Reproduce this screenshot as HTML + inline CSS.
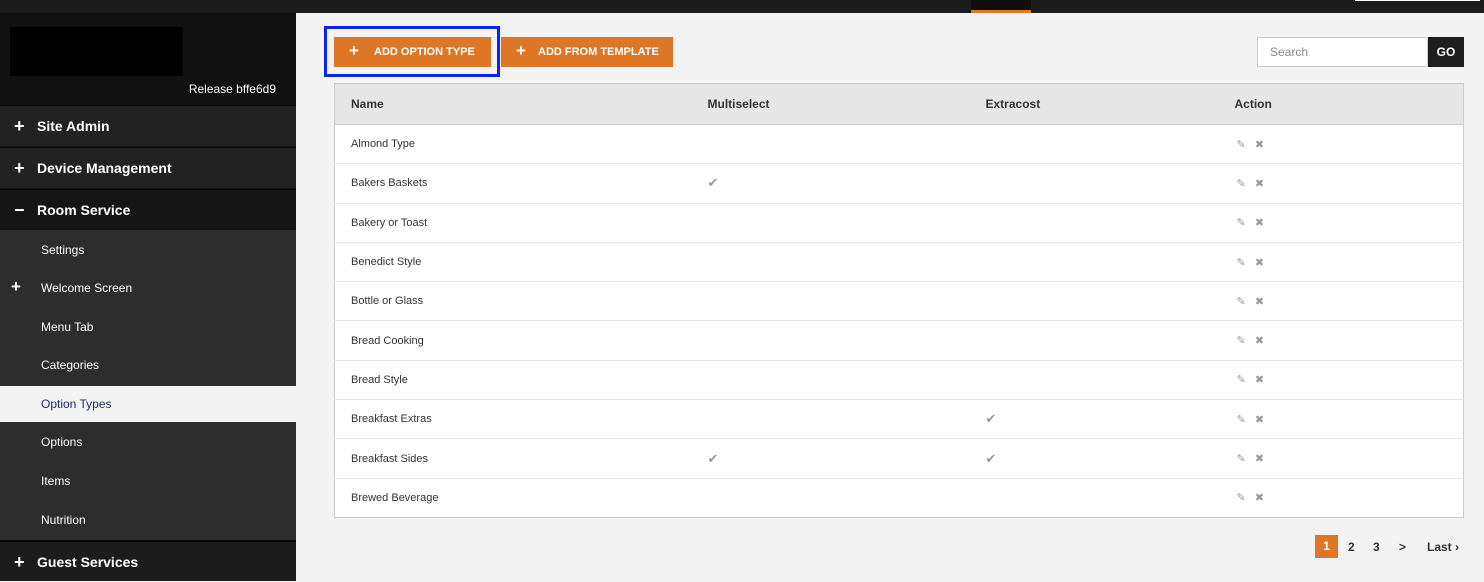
<!DOCTYPE html>
<html><head><style>
*{margin:0;padding:0;box-sizing:border-box}
body{width:1484px;height:565px;overflow:hidden;background:#f3f3f3;font-family:"Liberation Sans",sans-serif;position:relative}
.top{position:absolute;left:0;top:0;width:1484px;height:13px;background:#1b1b1b}
.tab{position:absolute;left:971px;top:0;width:60px;height:13px;background:#0f0f0f;border-bottom:3px solid #e07b24}
.tr{position:absolute;left:1355px;top:0;width:125px;height:1px;background:#fff}
.side{position:absolute;left:0;top:13px;width:296px;height:552px;background:#111}
.logo{position:absolute;left:10px;top:14px;width:173px;height:49px;background:#000}
.rel{position:absolute;right:20px;top:69px;color:#fff;font-size:12px}
.m{position:absolute;left:0;width:296px;height:41px;background:#222;border-top:1px solid #0a0a0a;color:#fff;font-weight:bold;font-size:14px;line-height:40px;padding-left:37px}
.m b{position:absolute;left:14px;top:0;font-size:18px}
.sub{position:absolute;left:0;top:217px;width:296px;height:310px;background:#2d2d2d}
.s{position:absolute;left:0;width:296px;color:#fff;font-size:12px;padding-left:41px}
.btn{position:absolute;top:37px;height:30px;background:#dd7726;color:#fff;font-weight:bold;font-size:11px;line-height:30px}
.btn span{font-size:17px;font-weight:bold;position:absolute;left:15px;top:-1px}
.hl{position:absolute;left:324px;top:26px;width:176px;height:51px;border:3px solid #0a23f5}
.search{position:absolute;left:1257px;top:37px;width:171px;height:30px;background:#fff;border:1px solid #ccc;color:#888;font-size:12px;line-height:28px;padding-left:12px}
.go{position:absolute;left:1428px;top:37px;width:36px;height:30px;background:#1e1e1e;color:#fff;font-weight:bold;font-size:12px;line-height:30px;text-align:center}
table{position:absolute;left:334px;top:83px;width:1130px;border-collapse:collapse;background:#fff;border:1px solid #ccc;font-size:11px;color:#333;table-layout:fixed}
th{background:#e6e6e6;height:41px;text-align:left;font-size:12px;font-weight:bold;color:#333;border-bottom:1px solid #ccc}
td{height:39.3px;border-top:1px solid #e6e6e6}
th:nth-child(1),td:nth-child(1){padding-left:16px;width:373px}
th:nth-child(2),td:nth-child(2){width:278px}
th:nth-child(3),td:nth-child(3){width:249px}
.ck{color:#999;font-size:13px}
.ic{color:#999;font-size:11px;padding-left:2px}
.pg{position:absolute;top:535px;font-size:12px;color:#333;font-weight:bold}
</style></head><body>
<div class="top"></div><div class="tab"></div><div class="tr"></div>
<div class="side">
<div class="logo"></div><div class="rel">Release bffe6d9</div>
<div class="m" style="top:92px"><b>+</b>Site Admin</div>
<div class="m" style="top:134px"><b>+</b>Device Management</div>
<div class="m" style="top:176px;background:#151515"><b>−</b>Room Service</div>
<div class="sub"></div>
<div class="s" style="top:230px">Settings</div>
<div class="s" style="top:268px"><b style="position:absolute;left:11px;font-size:17px;top:-4px">+</b>Welcome Screen</div>
<div class="s" style="top:307px">Menu Tab</div>
<div class="s" style="top:345px">Categories</div>
<div class="s" style="top:373px;height:36px;background:#f3f3f3;color:#1e2a5a;line-height:36px">Option Types</div>
<div class="s" style="top:422px">Options</div>
<div class="s" style="top:461px">Items</div>
<div class="s" style="top:500px">Nutrition</div>
<div class="m" style="top:527px;background:#1c1c1c;border-top:2px solid #000"><b>+</b>Guest Services</div>
</div>
<div class="btn" style="left:334px;width:157px;padding-left:40px"><span>+</span>ADD OPTION TYPE</div>
<div class="btn" style="left:501px;width:172px;padding-left:37px"><span>+</span>ADD FROM TEMPLATE</div>
<div class="hl"></div>
<div class="search">Search</div><div class="go">GO</div>
<table>
<tr><th>Name</th><th>Multiselect</th><th>Extracost</th><th>Action</th></tr>
<tr><td>Almond Type</td><td></td><td></td><td class="ic">✎ &nbsp; ✖</td></tr>
<tr><td>Bakers Baskets</td><td class="ck">✔</td><td></td><td class="ic">✎ &nbsp; ✖</td></tr>
<tr><td>Bakery or Toast</td><td></td><td></td><td class="ic">✎ &nbsp; ✖</td></tr>
<tr><td>Benedict Style</td><td></td><td></td><td class="ic">✎ &nbsp; ✖</td></tr>
<tr><td>Bottle or Glass</td><td></td><td></td><td class="ic">✎ &nbsp; ✖</td></tr>
<tr><td>Bread Cooking</td><td></td><td></td><td class="ic">✎ &nbsp; ✖</td></tr>
<tr><td>Bread Style</td><td></td><td></td><td class="ic">✎ &nbsp; ✖</td></tr>
<tr><td>Breakfast Extras</td><td></td><td class="ck">✔</td><td class="ic">✎ &nbsp; ✖</td></tr>
<tr><td>Breakfast Sides</td><td class="ck">✔</td><td class="ck">✔</td><td class="ic">✎ &nbsp; ✖</td></tr>
<tr><td>Brewed Beverage</td><td></td><td></td><td class="ic">✎ &nbsp; ✖</td></tr>
</table>
<div class="pg" style="left:1315px;top:535px;width:23px;height:23px;background:#dd7726;color:#fff;text-align:center;line-height:23px">1</div>
<div class="pg" style="left:1348px;top:540px">2</div>
<div class="pg" style="left:1373px;top:540px">3</div>
<div class="pg" style="left:1399px;top:540px">&gt;</div>
<div class="pg" style="left:1427px;top:540px">Last ›</div>
</body></html>
